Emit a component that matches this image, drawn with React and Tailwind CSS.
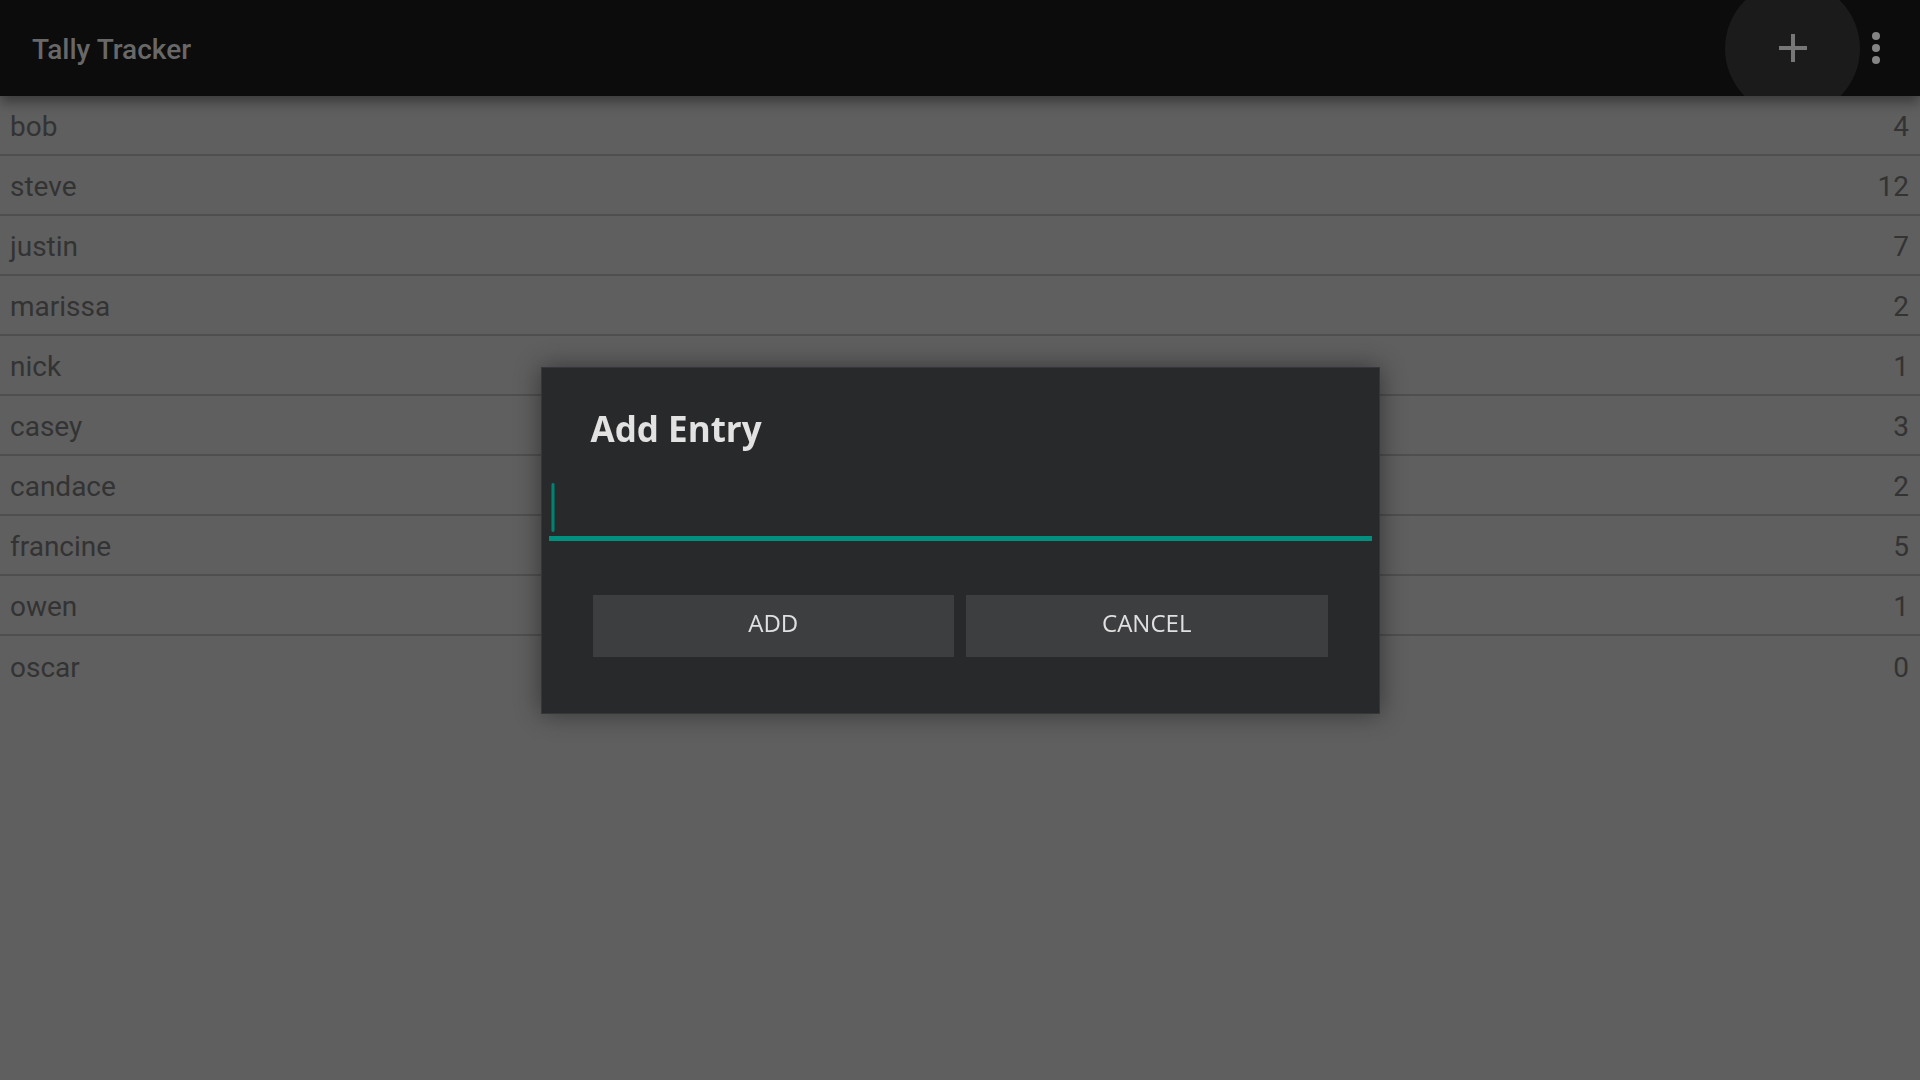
import React from 'react';

const entries = [
  { name: 'bob', count: 4 },
  { name: 'steve', count: 12 },
  { name: 'justin', count: 7 },
  { name: 'marissa', count: 2 },
  { name: 'nick', count: 1 },
  { name: 'casey', count: 3 },
  { name: 'candace', count: 2 },
  { name: 'francine', count: 5 },
  { name: 'owen', count: 1 },
  { name: 'oscar', count: 0 },
];

function Header() {
  return (
    <header className="relative z-10 h-[96px] bg-[#0c0c0c] flex items-center justify-between overflow-hidden shadow-[0_6px_12px_rgba(0,0,0,0.4)]">
      <span className="pl-[32px] pt-[3px] text-[28px] font-medium text-[#686868]" style={{ fontFamily: 'Roboto, sans-serif' }}>
        Tally Tracker
      </span>
      <div className="flex items-center h-full">
        <button className="relative w-[135px] h-full flex items-center justify-center">
          {/* pressed ripple */}
          <span className="absolute left-0 top-[-19px] w-[135px] h-[135px] rounded-full bg-[#1b1b1b]" />
          <svg className="relative" width="30" height="30" viewBox="0 0 30 30">
            <rect x="1" y="13" width="28" height="4" fill="#777" />
            <rect x="13" y="1" width="4" height="28" fill="#777" />
          </svg>
        </button>
        <button className="w-[32px] mr-[28px] h-full flex flex-col items-center justify-center gap-[4px]">
          <span className="w-[8px] h-[8px] rounded-full bg-[#858585]" />
          <span className="w-[8px] h-[8px] rounded-full bg-[#858585]" />
          <span className="w-[8px] h-[8px] rounded-full bg-[#858585]" />
        </button>
      </div>
    </header>
  );
}

function TallyList() {
  return (
    <ul style={{ fontFamily: 'Roboto, sans-serif' }}>
      {entries.map((e, i) => (
        <li
          key={e.name}
          className={
            'h-[60px] flex items-center justify-between pl-[10px] pr-[11px] pt-[3px] text-[28px] text-[#333333] ' +
            (i < entries.length - 1 ? 'border-b-2 border-[#4f4f4f]' : '')
          }
        >
          <span>{e.name}</span>
          <span>{e.count}</span>
        </li>
      ))}
    </ul>
  );
}

function AddEntryDialog() {
  return (
    <div className="fixed inset-0 z-20 flex items-center justify-center">
      <div
        className="w-[839px] h-[347px] bg-[#28292b] border border-[#36373a] shadow-[0_0_24px_rgba(0,0,0,0.45)] flex flex-col"
        style={{ fontFamily: '"Open Sans", sans-serif' }}
      >
        <h2 className="pl-[49px] pt-[39px] text-[35px] leading-[43px] font-bold text-[#e2e2e2]">Add Entry</h2>
        <div className="mx-[7px] mt-[28px] h-[63px] relative border-b-[5px] border-[#00907f]">
          <span className="absolute left-[2px] top-[5px] w-[4px] h-[49px] rounded-[2px] bg-gradient-to-r from-[#0b4c46] via-[#00927f] to-[#0b4c46]" />
        </div>
        <div className="mt-[54px] px-[51px] flex gap-[12px]">
          <button className="flex-1 h-[62px] pb-[6px] bg-[#3d3e40] text-[24px] text-[#e0e0e0]">ADD</button>
          <button className="flex-1 h-[62px] pb-[6px] bg-[#3d3e40] text-[24px] text-[#e0e0e0]">CANCEL</button>
        </div>
      </div>
    </div>
  );
}

export default function App() {
  return (
    <div className="w-full h-screen bg-[#5f5f5f] overflow-hidden flex flex-col">
      <Header />
      <main className="flex-1">
        <TallyList />
      </main>
      <AddEntryDialog />
    </div>
  );
}
